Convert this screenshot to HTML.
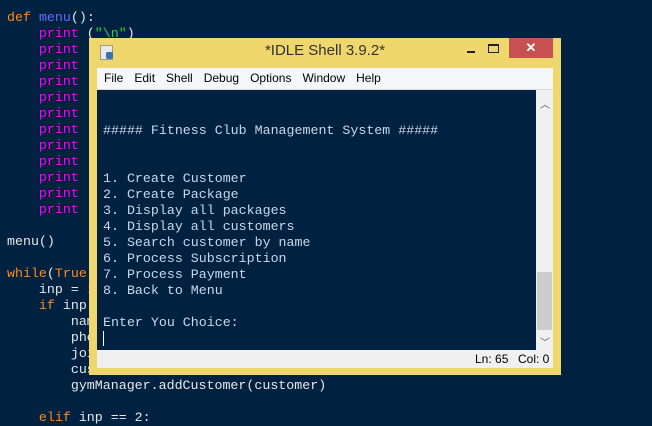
<!DOCTYPE html>
<html><head><style>
body{margin:0;width:652px;height:426px;background:#002240;overflow:hidden;position:relative;font-family:"Liberation Mono",monospace;}
.code{position:absolute;left:7px;top:10px;font-size:13.3px;line-height:16px;color:#e8e8e8;white-space:pre;}
.k{color:#ff8a1a}.f{color:#6b6bff}.p{color:#ff00ff}.s{color:#2fd52f}
.win{position:absolute;left:89px;top:38px;width:472px;height:337px;background:#efd76d;}
.title{position:absolute;left:0;top:0;width:472px;height:30px;font-family:"Liberation Sans",sans-serif;font-size:15px;color:#333;text-align:center;line-height:26px;}
.close{position:absolute;left:420px;top:0;width:44px;height:20px;background:#c75050;color:#fff;text-align:center;font:bold 13px/20px "Liberation Sans",sans-serif;}
.menu{position:absolute;left:8px;top:30px;width:456px;height:21px;background:#f5f6f7;font:12px/21px "Liberation Sans",sans-serif;color:#000;border-bottom:1px solid #dcdcdc;}
.menu span{margin-left:7px;margin-right:4px}
.text{position:absolute;left:8px;top:52px;width:439px;height:260px;background:#002240;}
.shell{position:absolute;left:6px;top:33px;font-size:13.3px;line-height:16px;color:#c8d8ea;white-space:pre;}
.sb{position:absolute;left:447px;top:52px;width:17px;height:260px;background:#f0f0f0;}
.thumb{position:absolute;left:1px;top:182px;width:15px;height:58px;background:#cdcdcd;}
.status{position:absolute;left:8px;top:312px;width:456px;height:18px;background:#f0f0f0;font:12px/18px "Liberation Sans",sans-serif;color:#000;}
</style></head><body>
<div class="code"><span class="k">def</span> <span class="f">menu</span>():
    <span class="p">print</span> (<span class="s">"\n"</span>)
    <span class="p">print</span>
    <span class="p">print</span>
    <span class="p">print</span>
    <span class="p">print</span>
    <span class="p">print</span>
    <span class="p">print</span>
    <span class="p">print</span>
    <span class="p">print</span>
    <span class="p">print</span>
    <span class="p">print</span>
    <span class="p">print</span>

menu()

<span class="k">while</span>(<span class="k">True</span>)
    inp = <span class="p">i</span>
    <span class="k">if</span> inp
        nam
        pho
        joi
        cus
        gymManager.addCustomer(customer)

    <span class="k">elif</span> inp == 2:</div>
<div class="win">
 <div class="title">*IDLE Shell 3.9.2*</div>
 <div style="position:absolute;left:11px;top:7px;width:11px;height:13px;background:#e8e8e8;border:1px solid #999"></div>
 <div style="position:absolute;left:17px;top:14px;width:7px;height:7px;background:#3a6fb0;border-radius:2px"></div>
 <div style="position:absolute;left:378px;top:13px;width:8px;height:2px;background:#222"></div>
 <div style="position:absolute;left:399px;top:6px;width:9px;height:6px;border:1px solid #222;border-top-width:2px"></div>
 <div class="close">✕</div>
 <div class="menu"><span>File</span><span>Edit</span><span>Shell</span><span>Debug</span><span>Options</span><span>Window</span><span>Help</span></div>
 <div class="text"><div class="shell">##### Fitness Club Management System #####


1. Create Customer
2. Create Package
3. Display all packages
4. Display all customers
5. Search customer by name
6. Process Subscription
7. Process Payment
8. Back to Menu

Enter You Choice:</div>
 <div style="position:absolute;left:6px;top:241px;width:1px;height:15px;background:#fff"></div></div>
 <div class="sb"><div style="position:absolute;left:4px;top:6px;font:10px sans-serif;color:#555">︿</div><div class="thumb"></div><div style="position:absolute;left:4px;top:244px;font:10px sans-serif;color:#555">﹀</div></div>
 <div class="status"><span style="position:absolute;left:378px">Ln: 65</span><span style="position:absolute;left:421px">Col: 0</span></div>
</div>
</body></html>
